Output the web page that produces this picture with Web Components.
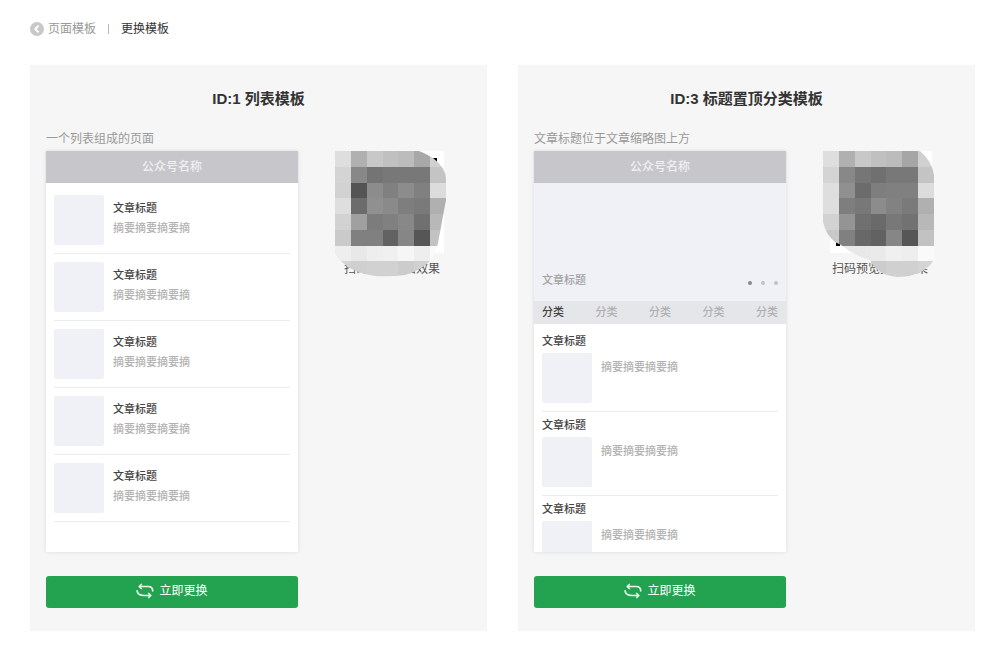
<!DOCTYPE html>
<html lang="zh-CN">
<head>
<meta charset="utf-8">
<meta name="viewport" content="width=device-width, initial-scale=1">
<title>更换模板</title>
<style>
body { margin: 0; background: #fff; color: #333; font: 12px/16px "Liberation Sans", "Noto Sans CJK SC", sans-serif; }
</style>
</head>
<body>
<template-page>
  <bread-crumb slot="nav"></bread-crumb>
  <template-card heading="ID:1 列表模板" note="一个列表组成的页面">
    <phone-preview slot="preview"><list-preview></list-preview></phone-preview>
    <qr-preview slot="qr" kind="list"></qr-preview>
  </template-card>
  <template-card heading="ID:3 标题置顶分类模板" note="文章标题位于文章缩略图上方">
    <phone-preview slot="preview"><category-preview></category-preview></phone-preview>
    <qr-preview slot="qr" kind="category"></qr-preview>
  </template-card>
</template-page>
<script>
const define = (name, render) => customElements.define(name, class extends HTMLElement {
  constructor() {
    super();
    this.attachShadow({ mode: 'open' });
  }
  connectedCallback() {
    this.shadowRoot.innerHTML = render(this);
  }
});

define('template-page', () => `
  <style>
    :host { display: block; padding: 21px 25px 25px 30px; }
    main { display: grid; grid-template-columns: 1fr 1fr; gap: 31px; margin-top: 28px; }
  </style>
  <slot name="nav"></slot>
  <main><slot></slot></main>`);

define('bread-crumb', () => `
  <style>
    :host { display: block; }
    nav { display: flex; align-items: center; }
    a { display: flex; align-items: center; gap: 4px; color: #999; text-decoration: none; }
    i { width: 1px; height: 10px; margin: 0 12px; background: #bbb; }
  </style>
  <nav aria-label="导航">
    <a href="#templates"><svg width="14" height="14" viewBox="0 0 14 14" aria-hidden="true"><circle cx="7" cy="7" r="7" fill="#c8c8c8"/><path d="M8.6 3.600 5.200 7l3.400 3.400" fill="none" stroke="#fff" stroke-width="2"/></svg>页面模板</a>
    <i></i>
    <span aria-current="page">更换模板</span>
  </nav>`);

define('template-card', el => `
  <style>
    :host { display: block; padding: 24px 16px 23px; background: #f6f6f6; }
    h2 { margin: 0 0 20px; text-align: center; font-size: 15px; line-height: 20px; font-weight: 700; }
    p { margin: 0 0 4px; padding-top: 2px; color: #999; }
    .body { display: flex; gap: 37px; align-items: flex-start; }
    ::slotted([slot=preview]) { flex: 0 0 252px; }
    button { display: flex; align-items: center; justify-content: center; gap: 5px; width: 252px; height: 32px; margin-top: 24px; padding: 0 0 2px; border: 0; border-radius: 3px; background: #23a350; color: #fff; font: inherit; cursor: pointer; }
  </style>
  <h2>${el.getAttribute('heading')}</h2>
  <p>${el.getAttribute('note')}</p>
  <div class="body"><slot name="preview"></slot><slot name="qr"></slot></div>
  <button type="button"><svg width="18" height="16" viewBox="0 0 18 16" fill="none" stroke="#e9f6ed" stroke-width="1.700" stroke-linecap="round" stroke-linejoin="round" aria-hidden="true"><path d="M5.300 1.500 3.200 3.500l2.100 2M3.500 3.500H12c3 0 4.700 1.400 4.700 4.300M12.700 10.500l2.100 2-2.100 2M14.500 12.500H8c-4 0-6.500-1.300-6.900-4.600"/></svg>立即更换</button>`);

define('phone-preview', () => `
  <style>
    :host { display: block; height: 401px; overflow: hidden; background: #fff; box-shadow: 0 0 4px rgba(0,0,0,.12); font-size: 11px; }
    header { line-height: 32px; text-align: center; font-size: 12px; font-weight: 500; background: #c7c6cb; color: #f0f0f2; }
  </style>
  <header>公众号名称</header>
  <slot></slot>`);

define('list-preview', () => `
  <style>
    :host { display: block; }
    ul { list-style: none; margin: 0; padding: 4px 8px; }
    li { display: flex; gap: 9px; padding: 8px 0; border-bottom: 1px solid #ececec; }
    .thumb { width: 50px; height: 50px; border-radius: 2px; background: #f0f1f6; }
    .text { padding-top: 3px; line-height: 20px; }
    b { display: block; font-weight: 500; color: #444; }
    span { font-weight: 500; color: #b2b2b2; }
  </style>
  <ul>${'<li><div class="thumb"></div><div class="text"><b>文章标题</b><span>摘要摘要摘要摘</span></div></li>'.repeat(5)}</ul>`);

define('category-preview', () => `
  <style>
    :host { display: block; font-weight: 500; }
    .banner { display: flex; align-items: flex-end; justify-content: space-between; height: 105px; padding: 0 8px 13px; background: #f0f1f6; color: #a2a2a4; }
    .dots { display: flex; gap: 9px; padding-bottom: 3px; }
    .dots i { width: 4px; height: 4px; border-radius: 50%; background: #c2c2c5; }
    .dots i:first-child { background: #888; }
    .tabs { display: flex; justify-content: space-between; padding: 0 8px; line-height: 23px; background: #e5e6ea; color: #b0b0b2; }
    .tabs b { font-weight: 500; color: #444; }
    ul { list-style: none; margin: 0; padding: 4px 8px; }
    li { padding: 5px 0 8px; border-bottom: 1px solid #ececec; }
    li b { display: block; margin-bottom: 4px; font-weight: 500; color: #444; }
    .row { display: flex; gap: 9px; color: #b2b2b2; line-height: 28px; }
    .thumb { width: 50px; height: 50px; border-radius: 2px; background: #f0f1f6; }
  </style>
  <div class="banner"><span>文章标题</span><div class="dots"><i></i><i></i><i></i></div></div>
  <div class="tabs"><b>分类</b><span>分类</span><span>分类</span><span>分类</span><span>分类</span></div>
  <ul>${'<li><b>文章标题</b><div class="row"><div class="thumb"></div><span>摘要摘要摘要摘</span></div></li>'.repeat(3)}</ul>`);

/* Grey levels of the pixelated code, one row of tiles per string. */
const codes = {
  list: {
    tiles: ['deb0c8c0bca8d0', 'd48874787878c4', 'd2548c808c80dc', 'de6c908a7e7ab0', 'd2a07c808870b8', 'ca8080628656c2', 'eee8eef0f6eefa', 'd4cfd1d1ccd0d4'],
    outline: 'M0 0H84Q92 3 98 7Q111 17 111 28V49L103 92Q101 104 94 111Q85 120 70 124Q55 126 40 125Q12 121 0 103Z',
    finder: 'M96 7H102V13Z'
  },
  category: {
    tiles: ['deb0c8c0bca6d0', 'd48876707878c4', 'de906c7e8080dc', 'de7e788c827ab0', 'd294706a7872b8', 'c88068628656c2', 'e8e8e8eaf0eefa', 'd4d0d0ccd0d0d4'],
    outline: 'M0 0H97Q109 10 111 24V109Q100 126 74 126Q54 124 47 109Q30 104 18 94L12 91Q3 84 0 71Z',
    finder: 'M13 90H17V95H13Z'
  }
};
const size = 15.86, rise = 15.75;

define('qr-preview', el => {
  const code = codes[el.getAttribute('kind')];
  const tiles = code.tiles.flatMap((row, y) => row.match(/../g).map((g, x) =>
    `<rect x="${x * size}" y="${y * rise}" width="${size}" height="${rise}" fill="#${g + g + g}"/>`)).join('');
  return `
  <style>
    :host { display: block; position: relative; width: 111px; }
    .code { width: 102px; height: 102px; margin-left: 7px; background: #fff; }
    .caption { margin-top: 8px; padding-left: 3px; text-align: center; color: #555; white-space: nowrap; }
    svg { position: absolute; left: 0; top: 0; }
  </style>
  <div class="code"></div>
  <div class="caption">扫码预览页面效果</div>
  <svg width="111" height="126" viewBox="0 0 111 126" role="img" aria-label="二维码">
    <clipPath id="outline"><path d="${code.outline}"/></clipPath>
    <path d="${code.finder}" fill="#000"/>
    <g clip-path="url(#outline)" shape-rendering="crispEdges">${tiles}</g>
  </svg>`;
});
</script>
</body>
</html>
